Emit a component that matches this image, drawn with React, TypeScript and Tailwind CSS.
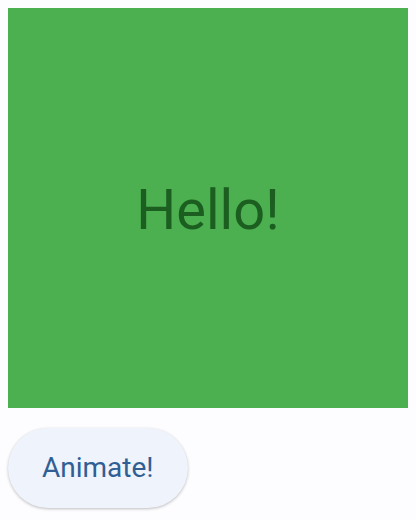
export default function App() {
  return (
    <div className="min-h-[520px] w-[416px] bg-[#fdfcff] p-2 font-['Roboto',sans-serif]">
      <div className="flex h-[400px] w-[400px] items-center justify-center bg-[#4caf50]">
        <span className="pt-[4px] text-[56px] leading-none text-[#1b5e20]">Hello!</span>
      </div>
      <div className="mt-5">
        <button className="flex h-[80px] items-center rounded-full bg-[#eff3fb] px-[34px] text-[28px] text-[#2f5f95] shadow-[0_1px_3px_rgba(0,0,0,0.25)]">
          Animate!
        </button>
      </div>
    </div>
  );
}
